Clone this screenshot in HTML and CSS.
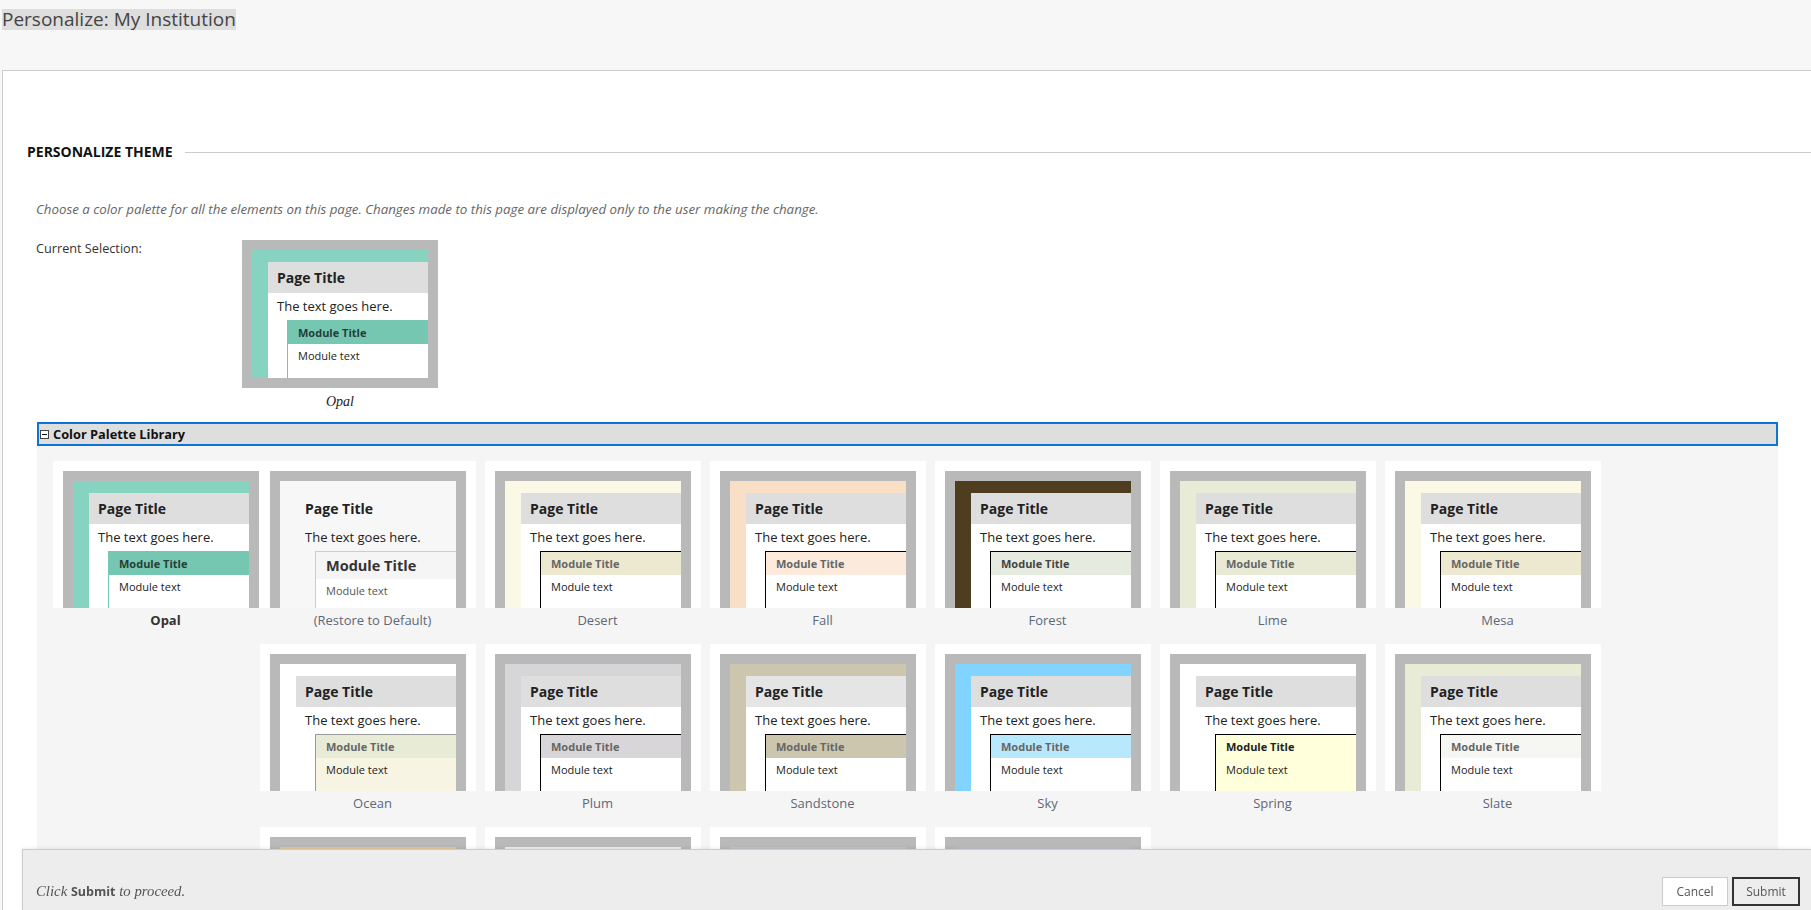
FILE: index.html
```html
<!DOCTYPE html>
<html lang="en">

<head>
  <title>Personalize: My Institution</title>
  <meta name="viewport" content="width=device-width, initial-scale=1">
  <link rel="stylesheet" href="styles.css">
</head>

<body>
  <!-- Page title -->
  <div class="page-head">
    <h1><span>Personalize: My Institution</span></h1>
  </div>

  <div class="panel">
    <div class="section-head">
      <h2>PERSONALIZE THEME</h2>
      <div class="rule"></div>
    </div>

    <p class="hint">Choose a color palette for all the elements on this page. Changes made to this page are displayed only to the user making the change.</p>

    <!-- Current palette -->
    <div class="current">
      <div class="current-label">Current Selection:</div>
      <div class="current-pick">
        <div id="currentSwatch"></div>
        <div class="current-name">Opal</div>
      </div>
    </div>

    <!-- Palette library -->
    <div class="library">
      <div class="library-bar">
        <svg class="toggle" width="9" height="9" viewBox="0 0 9 9">
          <rect x="0.5" y="0.5" width="8" height="8" fill="#fff" stroke="#444" />
          <line x1="2" y1="4.5" x2="7" y2="4.5" stroke="#111" />
        </svg>
        Color Palette Library
      </div>
      <div class="library-body">
        <div class="palette-grid" id="paletteGrid"></div>
      </div>
    </div>
  </div>

  <!-- Submit bar -->
  <div class="submit-bar">
    <p>Click <b>Submit</b> to proceed.</p>
    <div class="buttons">
      <button class="cancel">Cancel</button>
      <button class="submit">Submit</button>
    </div>
  </div>

  <script>
    // [class, label, starts a new row]
    const palettes = [
      ["opal", "Opal", false],
      ["default", "(Restore to Default)", false],
      ["desert", "Desert", false],
      ["fall", "Fall", false],
      ["forest", "Forest", false],
      ["lime", "Lime", false],
      ["mesa", "Mesa", false],
      ["ocean", "Ocean", true],
      ["plum", "Plum", false],
      ["sandstone", "Sandstone", false],
      ["sky", "Sky", false],
      ["spring", "Spring", false],
      ["slate", "Slate", false],
      ["sunrise", "Sunrise", true],
      ["tan", "Tan", false],
      ["violet", "Violet", false],
      ["wine", "Wine", false]
    ];

    function swatch(key, extra) {
      return `<div class="swatch ${key} ${extra || ''}">
        <div class="frame">
          <div class="sheet">
            <div class="sheet-title">Page Title</div>
            <div class="sheet-text">The text goes here.</div>
            <div class="module">
              <div class="module-title">Module Title</div>
              <div class="module-text">Module text</div>
            </div>
          </div>
        </div>
      </div>`;
    }

    document.getElementById('currentSwatch').innerHTML = swatch('opal', 'big');

    const grid = document.getElementById('paletteGrid');
    palettes.forEach((p, i) => {
      const cell = document.createElement('div');
      cell.classList.add('palette');
      if (i === 0) cell.classList.add('selected');
      if (p[2]) cell.classList.add('row-start');
      cell.innerHTML = `<div class="card">${swatch(p[0])}</div><div class="palette-name">${p[1]}</div>`;
      grid.appendChild(cell);
    });
  </script>
</body>

</html>
```

FILE: styles.css
```css
* {
  box-sizing: border-box;
}

body {
  margin: 0;
  background: #f7f7f7;
  font-family: 'Open Sans', 'Liberation Sans', sans-serif;
  color: #222;
}

.page-head {
  height: 70px;
  padding: 9px 0 0 2px;
}

.page-head h1 {
  margin: 0;
  font-size: 19px;
  font-weight: 400;
  line-height: 21px;
}

.page-head h1 span {
  display: inline-block;
  background: #dedede;
  color: #444;
}

.panel {
  margin-left: 2px;
  min-height: 840px;
  padding-top: 71px;
  background: #fff;
  border-top: 1px solid #ccc;
  border-left: 1px solid #ccc;
}

.section-head {
  display: flex;
  align-items: center;
  height: 20px;
  padding-left: 24px;
}

.section-head h2 {
  margin: 0;
  font-size: 14px;
  line-height: 20px;
  font-weight: 700;
  color: #111;
}

.rule {
  flex: 1;
  height: 1px;
  margin-left: 12px;
  background: #ccc;
}

.hint {
  margin: 38px 0 0 33px;
  font-size: 13.3px;
  line-height: 18px;
  font-style: italic;
  color: #666;
}

.current {
  display: flex;
  margin-top: 22px;
  padding-left: 33px;
}

.current-label {
  width: 206px;
  font-size: 12.7px;
  line-height: 17px;
  color: #333;
}

.current-pick {
  width: 196px;
}

.current-name {
  margin-top: 5px;
  text-align: center;
  font-family: 'Liberation Serif', serif;
  font-style: italic;
  font-size: 14px;
  line-height: 18px;
  color: #222;
}

.library {
  margin: 11px 33px 0 34px;
}

.library-bar {
  display: flex;
  align-items: center;
  gap: 4px;
  height: 24px;
  padding-left: 1px;
  background: #dedede;
  border: 2px solid #0b74d4;
  font-size: 12.8px;
  font-weight: 700;
  color: #111;
}

.library-body {
  min-height: 560px;
  padding: 15px 0 0 16px;
  background: #f5f5f5;
}

.palette-grid {
  display: grid;
  grid-template-columns: 198px repeat(6, 216px);
  grid-auto-rows: 183px;
  column-gap: 9px;
}

.palette.row-start {
  grid-column-start: 2;
}

.palette.selected {
  width: 216px;
}

.card {
  width: 216px;
  padding: 10px 10px 0;
  background: #fff;
}

.palette-name {
  margin-top: 2px;
  padding-left: 9px;
  width: 216px;
  text-align: center;
  font-size: 13px;
  line-height: 20px;
  color: #5d6877;
}

.selected .palette-name {
  font-weight: 700;
  color: #333;
}

/* Theme thumbnail */
.swatch {
  --frame: #fff;
  --mod-head: #ede8d0;
  --mod-line: #000;
  --mod-body: #fff;
  --mod-ink: #666;
  width: 196px;
  height: 137px;
  padding: 10px 10px 0;
  background: #b9b9b9;
  overflow: hidden;
}

.frame {
  height: 100%;
  padding: 12px 0 0 16px;
  background: var(--frame);
}

.sheet {
  display: flex;
  flex-direction: column;
  height: 100%;
  background: #fff;
}

.sheet-title {
  flex: none;
  height: 31px;
  padding-left: 9px;
  line-height: 31px;
  background: #dedede;
  font-size: 14px;
  font-weight: 700;
  color: #222;
}

.sheet-text {
  flex: none;
  height: 27px;
  padding-left: 9px;
  line-height: 27px;
  font-size: 13px;
  color: #222;
}

.module {
  flex: 1;
  margin-left: 19px;
  background: var(--mod-body);
  border-top: 1px solid var(--mod-line);
  border-left: 1px solid var(--mod-line);
}

.module-title {
  height: 23px;
  padding-left: 10px;
  line-height: 23px;
  background: var(--mod-head);
  font-size: 11px;
  font-weight: 700;
  color: var(--mod-ink);
}

.module-text {
  padding-left: 10px;
  line-height: 24px;
  font-size: 11px;
  color: #222;
}

/* Current selection shows the whole thumbnail */
.swatch.big {
  height: 148px;
  padding: 10px;
}

/* Palettes */
.opal {
  --frame: #87d3c1;
  --mod-head: #76c7b1;
  --mod-line: #76c7b1;
  --mod-ink: #263d38;
}

.default {
  --frame: #f7f7f7;
  --mod-head: #f5f5f5;
  --mod-line: #ccc;
  --mod-ink: #333;
}

.default .sheet,
.default .sheet-title {
  background: #f7f7f7;
}

.default .module-title {
  height: 27px;
  line-height: 27px;
  font-size: 14.5px;
}

.default .module-text {
  color: #555;
}

.desert {
  --frame: #fbf8e6;
  --mod-head: #ede8d0;
}

.fall {
  --frame: #f9dfc5;
  --mod-head: #fcebdc;
}

.forest {
  --frame: #4f3d1f;
  --mod-head: #e6ebe0;
  --mod-ink: #444;
}

.lime {
  --frame: #e8ebd6;
  --mod-head: #e9ead5;
}

.mesa {
  --frame: #fbf8e6;
  --mod-head: #ede8d0;
}

.ocean {
  --frame: #fff;
  --mod-head: #e8ebd6;
  --mod-line: #999;
  --mod-body: #f7f4e4;
}

.plum {
  --frame: #d6d5d8;
  --mod-head: #d8d6d9;
}

.sandstone {
  --frame: #cdc6ae;
  --mod-head: #cdc6ae;
}

.sandstone .sheet-title {
  background: #e5e5e5;
}

.sky {
  --frame: #80d4ff;
  --mod-head: #b8e8fc;
}

.spring {
  --frame: #fff;
  --mod-head: #ffffdc;
  --mod-body: #ffffdc;
  --mod-ink: #222;
}

.slate {
  --frame: #e8ebd6;
  --mod-head: #f6f7f2;
}

.sunrise {
  --frame: #e3c89b;
}

.tan {
  --frame: #eeeeee;
}

.violet {
  --frame: #c4c2c8;
}

.wine {
  --frame: #bdbcc8;
}

/* Fixed submit bar */
.submit-bar {
  position: fixed;
  left: 22px;
  right: 0;
  bottom: 0;
  height: 61px;
  display: flex;
  align-items: center;
  justify-content: space-between;
  padding: 27px 11px 4px 13px;
  background: #ededed;
  border-top: 1px solid #ccc;
  border-left: 1px solid #ccc;
  box-shadow: 0 -1px 3px rgba(0, 0, 0, 0.08);
}

.submit-bar p {
  margin: 0;
  font-family: 'Liberation Serif', serif;
  font-style: italic;
  font-size: 14.8px;
  color: #555;
}

.submit-bar b {
  font-family: 'Open Sans', sans-serif;
  font-style: normal;
  font-size: 12.5px;
  font-weight: 700;
}

.buttons {
  display: flex;
  gap: 4px;
}

.buttons button {
  height: 29px;
  font-family: 'Open Sans', sans-serif;
  font-size: 12px;
  color: #555;
  cursor: pointer;
}

.cancel {
  width: 66px;
  background: #fff;
  border: 1px solid #ccc;
}

.submit {
  width: 68px;
  background: #ededed;
  border: 2px solid #333;
}
```
